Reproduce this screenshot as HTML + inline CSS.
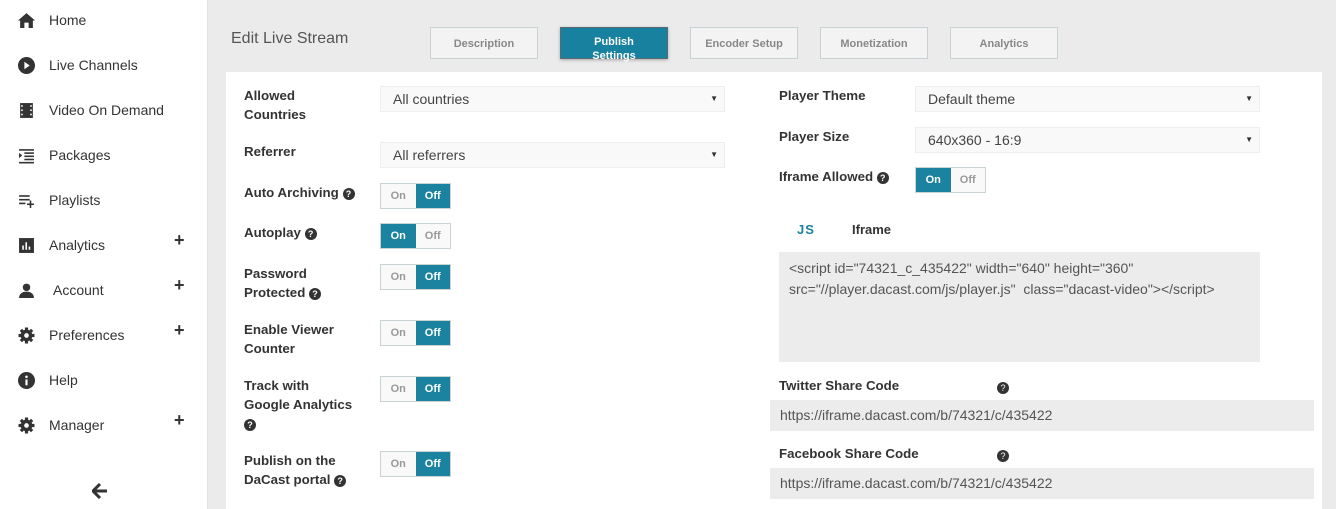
<!DOCTYPE html>
<html><head><style>
*{box-sizing:border-box;margin:0;padding:0}
body{width:1336px;height:509px;overflow:hidden;background:#ebebeb;font-family:"Liberation Sans",sans-serif;color:#333;position:relative}
.a{position:absolute}
#side{left:0;top:0;width:208px;height:509px;background:#fff;border-right:1px solid #e2e2e2}
.nav{position:absolute;left:49px;font-size:14px;color:#333}
.ic{position:absolute;left:18px;width:17px;height:17px}
.plus{position:absolute;left:174px;font-size:18px;font-weight:bold;color:#333}
.tab{position:absolute;top:27px;width:108px;height:32px;border:1px solid #c8d1d4;background:#f3f3f3;color:#888;font-size:11px;font-weight:bold;text-align:center;line-height:32px}
#panel{left:226px;top:72px;width:1096px;height:437px;background:#fff}
.lbl{position:absolute;font-size:13.3px;font-weight:bold;color:#333;line-height:19px}
.sel{position:absolute;height:26px;border:1px solid #eee;background:#f9f9f9;font-size:14px;color:#444;padding-left:12px;line-height:24px}
.sel:after{content:"▼";position:absolute;right:6px;top:0;font-size:8px;color:#333}
.tg{position:absolute;width:71px;height:26px;border:1px solid #c9d3d6;display:flex;font-size:11px;font-weight:bold}
.tg span{flex:1;text-align:center;line-height:24px;color:#999;background:#f9f9f9}
.tg span.on{background:#1b82a0;color:#fff}
.q{display:inline-block;width:12px;height:12px;border-radius:50%;background:#333;color:#fff;font-size:9px;text-align:center;line-height:12px;vertical-align:0px}
.box{position:absolute;background:#ececec;font-size:14px;color:#555}
</style></head><body>
<div id="side" class="a">
<svg class="ic" style="top:12px" viewBox="0 0 16 16"><path d="M8 1L0 8h2v7h4v-5h4v5h4V8h2z" fill="#333"/></svg>
<div class="nav" style="top:12px">Home</div>
<svg class="ic" style="top:57px" viewBox="0 0 16 16"><circle cx="8" cy="8" r="8" fill="#333"/><path d="M6 4.5v7l5-3.5z" fill="#fff"/></svg>
<div class="nav" style="top:57px">Live Channels</div>
<svg class="ic" style="top:102px" viewBox="0 0 16 16"><rect x="2" y="1" width="12" height="14" fill="#333"/><g fill="#fff"><rect x="3" y="3" width="1.5" height="1.5"/><rect x="3" y="7" width="1.5" height="1.5"/><rect x="3" y="11" width="1.5" height="1.5"/><rect x="11.5" y="3" width="1.5" height="1.5"/><rect x="11.5" y="7" width="1.5" height="1.5"/><rect x="11.5" y="11" width="1.5" height="1.5"/></g></svg>
<div class="nav" style="top:102px">Video On Demand</div>
<svg class="ic" style="top:147px" viewBox="0 0 16 16"><g fill="#333"><rect x="1" y="2" width="14" height="1.5"/><rect x="6" y="5" width="9" height="1.5"/><rect x="6" y="8" width="9" height="1.5"/><rect x="6" y="11" width="9" height="1.5"/><rect x="1" y="14" width="14" height="1.5"/><path d="M1 5.5l3 2.5-3 2.5z"/></g></svg>
<div class="nav" style="top:147px">Packages</div>
<svg class="ic" style="top:192px" viewBox="0 0 16 16"><g fill="#333"><rect x="1" y="3" width="10" height="1.5"/><rect x="1" y="6.5" width="10" height="1.5"/><rect x="1" y="10" width="6" height="1.5"/><rect x="11" y="8" width="1.5" height="7"/><rect x="8.5" y="10.8" width="6.5" height="1.5"/></g></svg>
<div class="nav" style="top:192px">Playlists</div>
<svg class="ic" style="top:237px" viewBox="0 0 16 16"><rect x="1" y="1" width="14" height="14" fill="#333"/><g fill="#fff"><rect x="4" y="8" width="1.5" height="4"/><rect x="7" y="5" width="1.5" height="7"/><rect x="10" y="9" width="1.5" height="3"/></g></svg>
<div class="nav" style="top:237px">Analytics</div><div class="plus" style="top:230px">+</div>
<svg class="ic" style="top:282px" viewBox="0 0 16 16"><g fill="#333"><circle cx="8" cy="5" r="3.5"/><path d="M1 15c0-4 3-6 7-6s7 2 7 6z"/></g></svg>
<div class="nav" style="top:282px;left:53px">Account</div><div class="plus" style="top:275px">+</div>
<svg class="ic" style="top:327px" viewBox="0 0 16 16"><g fill="#333"><circle cx="8" cy="8" r="5.5"/><g stroke="#333" stroke-width="3"><path d="M8 0.5v15M0.5 8h15M2.7 2.7l10.6 10.6M13.3 2.7L2.7 13.3"/></g></g><circle cx="8" cy="8" r="2.2" fill="#fff"/></svg>
<div class="nav" style="top:327px">Preferences</div><div class="plus" style="top:320px">+</div>
<svg class="ic" style="top:372px" viewBox="0 0 16 16"><circle cx="8" cy="8" r="8" fill="#333"/><rect x="7" y="7" width="2" height="5.5" fill="#fff"/><circle cx="8" cy="4.5" r="1.2" fill="#fff"/></svg>
<div class="nav" style="top:372px">Help</div>
<svg class="ic" style="top:417px" viewBox="0 0 16 16"><g fill="#333"><circle cx="8" cy="8" r="5.5"/><g stroke="#333" stroke-width="3"><path d="M8 0.5v15M0.5 8h15M2.7 2.7l10.6 10.6M13.3 2.7L2.7 13.3"/></g></g><circle cx="8" cy="8" r="2.2" fill="#fff"/></svg>
<div class="nav" style="top:417px">Manager</div><div class="plus" style="top:410px">+</div>
<svg class="a" style="left:92px;top:483px" width="16" height="16" viewBox="0 0 16 16"><path d="M8 1L1 8l7 7M1.5 8H15" stroke="#333" stroke-width="3" fill="none"/></svg>
</div>

<div class="a" style="left:231px;top:30px;font-size:16px;color:#555">Edit Live Stream</div>
<div class="tab" style="left:430px">Description</div>
<div class="tab" style="left:560px;background:#17819f;border-color:#5a6a70;color:#fff;line-height:14px;padding-top:7px;box-shadow:0 1px 3px rgba(0,0,0,.3)">Publish<br>Settings</div>
<div class="tab" style="left:690px">Encoder Setup</div>
<div class="tab" style="left:820px">Monetization</div>
<div class="tab" style="left:950px">Analytics</div>

<div id="panel" class="a"></div>

<div class="lbl" style="left:244px;top:86px">Allowed<br>Countries</div>
<div class="sel" style="left:380px;top:86px;width:345px">All countries</div>
<div class="lbl" style="left:244px;top:142px">Referrer</div>
<div class="sel" style="left:380px;top:142px;width:345px">All referrers</div>
<div class="lbl" style="left:244px;top:183px">Auto Archiving <span class="q">?</span></div>
<div class="tg" style="left:380px;top:183px"><span>On</span><span class="on">Off</span></div>
<div class="lbl" style="left:244px;top:223px">Autoplay <span class="q">?</span></div>
<div class="tg" style="left:380px;top:223px"><span class="on">On</span><span>Off</span></div>
<div class="lbl" style="left:244px;top:264px">Password<br>Protected <span class="q">?</span></div>
<div class="tg" style="left:380px;top:264px"><span>On</span><span class="on">Off</span></div>
<div class="lbl" style="left:244px;top:320px">Enable Viewer<br>Counter</div>
<div class="tg" style="left:380px;top:320px"><span>On</span><span class="on">Off</span></div>
<div class="lbl" style="left:244px;top:376px">Track with<br>Google Analytics<br><span class="q">?</span></div>
<div class="tg" style="left:380px;top:376px"><span>On</span><span class="on">Off</span></div>
<div class="lbl" style="left:244px;top:451px">Publish on the<br>DaCast portal <span class="q">?</span></div>
<div class="tg" style="left:380px;top:451px"><span>On</span><span class="on">Off</span></div>

<div class="lbl" style="left:779px;top:86px">Player Theme</div>
<div class="sel" style="left:915px;top:86px;width:345px">Default theme</div>
<div class="lbl" style="left:779px;top:127px">Player Size</div>
<div class="sel" style="left:915px;top:127px;width:345px">640x360 - 16:9</div>
<div class="lbl" style="left:779px;top:167px">Iframe Allowed <span class="q">?</span></div>
<div class="tg" style="left:915px;top:167px"><span class="on">On</span><span>Off</span></div>
<div class="a" style="left:797px;top:222px;font-size:13px;font-weight:bold;color:#1b82a0;letter-spacing:1px">JS</div>
<div class="a" style="left:852px;top:222px;font-size:13px;font-weight:bold;color:#333">Iframe</div>
<div class="box" style="left:779px;top:252px;width:481px;height:110px;padding:6px 10px;font-size:14px;line-height:21px">&lt;script id="74321_c_435422" width="640" height="360"<br>src="//player.dacast.com/js/player.js"&nbsp; class="dacast-video"&gt;&lt;/script&gt;</div>
<div class="lbl" style="left:779px;top:376px">Twitter Share Code</div>
<div class="a" style="left:997px;top:378px"><span class="q">?</span></div>
<div class="box" style="left:770px;top:400px;width:544px;height:31px;padding-left:10px;line-height:30px">https://iframe.dacast.com/b/74321/c/435422</div>
<div class="lbl" style="left:779px;top:444px">Facebook Share Code</div>
<div class="a" style="left:997px;top:446px"><span class="q">?</span></div>
<div class="box" style="left:770px;top:468px;width:544px;height:31px;padding-left:10px;line-height:30px">https://iframe.dacast.com/b/74321/c/435422</div>
</body></html>
